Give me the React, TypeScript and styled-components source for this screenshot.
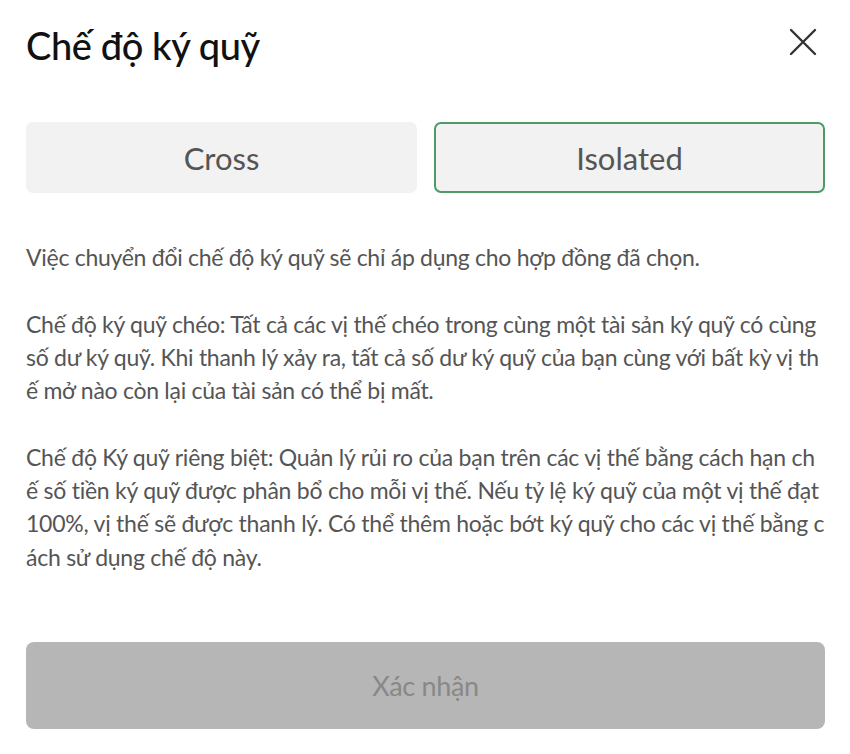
import React, { useState } from 'react'
import styled, { createGlobalStyle } from 'styled-components'

const GlobalStyle = createGlobalStyle`
  html, body {
    margin: 0;
    padding: 0;
    background: #fff;
  }
  body {
    font-family: Lato, "Noto Sans", "Liberation Sans", sans-serif;
  }
  * {
    box-sizing: border-box;
  }
`

const Modal = styled.div`
  width: 850px;
  height: 754px;
  padding: 22px 25px 0 26px;
  display: flex;
  flex-direction: column;
`

const Header = styled.div`
  display: flex;
  align-items: center;
  justify-content: space-between;
  height: 46px;
`

const Title = styled.h1`
  margin: 0;
  font-size: 38px;
  font-weight: 500;
  color: #111;
  letter-spacing: -0.4px;
`

const CloseButton = styled.button`
  border: none;
  background: none;
  padding: 0;
  width: 32px;
  height: 32px;
  margin: 0 6px 6px 0;
  display: flex;
  align-items: center;
  justify-content: center;
  cursor: pointer;
`

const ModeRow = styled.div`
  display: grid;
  grid-template-columns: 1fr 1fr;
  gap: 17px;
  margin-top: 54px;
`

const ModeButton = styled.button<{ $active: boolean }>`
  height: 71px;
  border-radius: 7px;
  background: #f2f2f2;
  border: 2px solid ${p => (p.$active ? '#4c9a66' : '#f2f2f2')};
  font-family: inherit;
  font-size: 31px;
  color: #555;
  cursor: pointer;
`

const Description = styled.div`
  margin-top: 48px;
  display: flex;
  flex-direction: column;
  gap: 33.3px;
`

const Paragraph = styled.p<{ $tracking?: number }>`
  margin: 0;
  font-size: 23px;
  line-height: 33.3px;
  color: #555;
  word-break: break-all;
  letter-spacing: ${p => p.$tracking ?? -0.28}px;
`

const ConfirmButton = styled.button`
  margin-top: auto;
  margin-bottom: 25px;
  height: 87px;
  border: none;
  border-radius: 8px;
  background: #b6b6b6;
  color: #888;
  font-family: inherit;
  font-size: 27px;
  letter-spacing: -0.3px;
`

const CloseIcon = () => (
  <svg width="28" height="28" viewBox="0 0 28 28">
    <path d="M2 2 L26 26 M26 2 L2 26" stroke="#333" strokeWidth="2.4" strokeLinecap="round" />
  </svg>
)

export default function App() {
  const [mode, setMode] = useState<'cross' | 'isolated'>('isolated')
  return (
    <>
      <GlobalStyle />
      <Modal>
        <Header>
          <Title>Chế độ ký quỹ</Title>
          <CloseButton aria-label="close">
            <CloseIcon />
          </CloseButton>
        </Header>
        <ModeRow>
          <ModeButton $active={mode === 'cross'} onClick={() => setMode('cross')}>
            Cross
          </ModeButton>
          <ModeButton $active={mode === 'isolated'} onClick={() => setMode('isolated')}>
            Isolated
          </ModeButton>
        </ModeRow>
        <Description>
          <Paragraph>Việc chuyển đổi chế độ ký quỹ sẽ chỉ áp dụng cho hợp đồng đã chọn.</Paragraph>
          <Paragraph>
            Chế độ ký quỹ chéo: Tất cả các vị thế chéo trong cùng một tài sản ký quỹ có cùng số dư ký quỹ. Khi
            thanh lý xảy ra, tất cả số dư ký quỹ của bạn cùng với bất kỳ vị thế mở nào còn lại của tài sản có
            thể bị mất.
          </Paragraph>
          <Paragraph $tracking={-0.245}>
            Chế độ Ký quỹ riêng biệt: Quản lý rủi ro của bạn trên các vị thế bằng cách hạn chế số tiền ký quỹ
            được phân bổ cho mỗi vị thế. Nếu tỷ lệ ký quỹ của một vị thế đạt 100%, vị thế sẽ được thanh lý. Có
            thể thêm hoặc bớt ký quỹ cho các vị thế bằng cách sử dụng chế độ này.
          </Paragraph>
        </Description>
        <ConfirmButton disabled>Xác nhận</ConfirmButton>
      </Modal>
    </>
  )
}
